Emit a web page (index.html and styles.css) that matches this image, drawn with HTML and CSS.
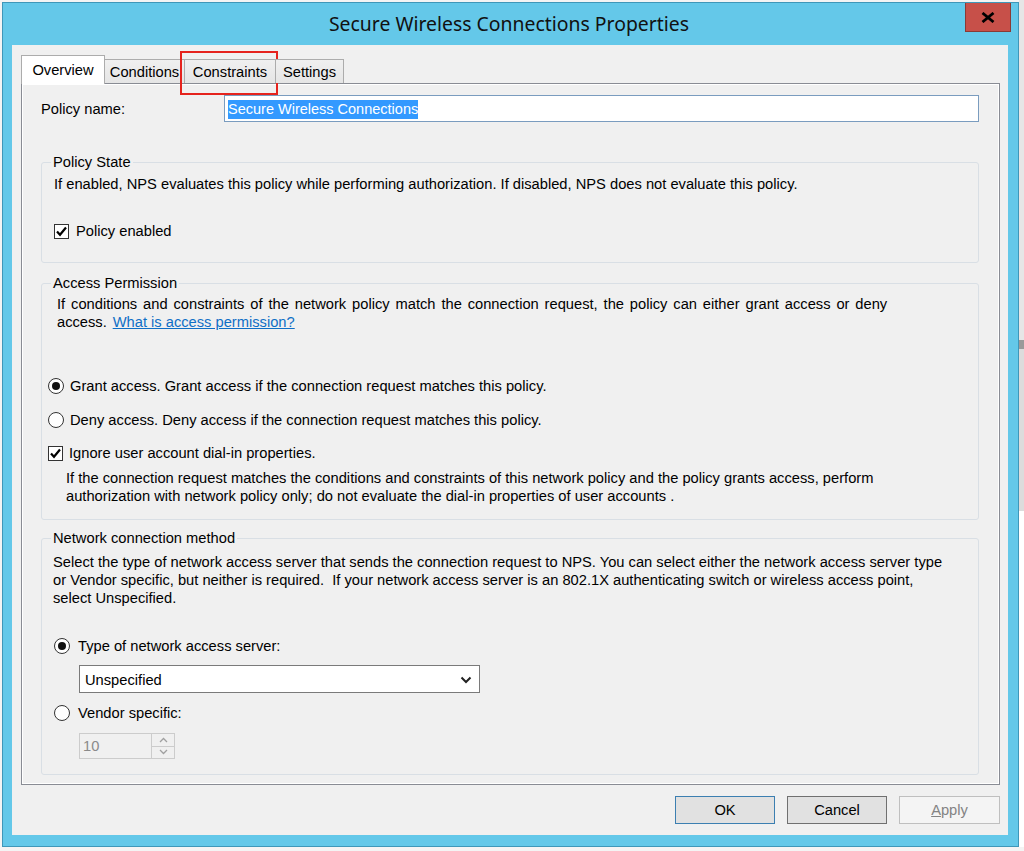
FILE: index.html
```html
<!DOCTYPE html>
<html lang="en">
<head>
  <meta charset="UTF-8">
  <title>Secure Wireless Connections Properties</title>
  <link rel="stylesheet" href="styles.css">
</head>
<body>
  <div class="backdrop-edge"></div>
  <div class="window">
    <div class="titlebar">
      <span></span>
      <h1 class="title">Secure Wireless Connections Properties</h1>
      <button class="close-btn" aria-label="Close">
        <svg width="14" height="11" viewBox="0 0 14 11"><path d="M1.5 1 L12.5 10 M12.5 1 L1.5 10" stroke="#000" stroke-width="2.8" fill="none"/></svg>
      </button>
    </div>

    <div class="client">
      <div class="tabs">
        <div class="tab active tab-overview">Overview</div>
        <div class="tab tab-conditions">Conditions</div>
        <div class="tab tab-constraints">Constraints<span class="callout"></span></div>
        <div class="tab tab-settings">Settings</div>
      </div>

      <div class="pane">
        <div class="name-row">
          <label class="name-label">Policy name:</label>
          <div class="textbox"><span class="selection">Secure Wireless Connections</span></div>
        </div>

        <!-- Policy State -->
        <fieldset class="group group-state">
          <legend>Policy State</legend>
          <p class="desc">If enabled, NPS evaluates this policy while performing authorization. If disabled, NPS does not evaluate this policy.</p>
          <div class="option option-enabled">
            <span class="checkbox checked"><svg width="13" height="13" viewBox="0 0 13 13"><path d="M2 6.5 L5 9.8 L11 2.5" stroke="#000" stroke-width="2.2" fill="none"/></svg></span>
            Policy enabled
          </div>
        </fieldset>

        <!-- Access Permission -->
        <fieldset class="group group-access">
          <legend>Access Permission</legend>
          <p class="desc desc-access">If conditions and constraints of the network policy match the connection request, the policy can either grant access or deny<br>access. <a href="#" class="link">What is access permission?</a></p>
          <div class="option option-grant"><span class="radio checked"></span>Grant access. Grant access if the connection request matches this policy.</div>
          <div class="option option-deny"><span class="radio"></span>Deny access. Deny access if the connection request matches this policy.</div>
          <div class="option option-ignore">
            <span class="checkbox checked"><svg width="13" height="13" viewBox="0 0 13 13"><path d="M2 6.5 L5 9.8 L11 2.5" stroke="#000" stroke-width="2.2" fill="none"/></svg></span>
            Ignore user account dial-in properties.
          </div>
          <p class="note">If the connection request matches the conditions and constraints of this network policy and the policy grants access, perform<br>authorization with network policy only; do not evaluate the dial-in properties of user accounts .</p>
        </fieldset>

        <!-- Network connection method -->
        <fieldset class="group group-method">
          <legend>Network connection method</legend>
          <p class="desc">Select the type of network access server that sends the connection request to NPS. You can select either the network access server type<br>or Vendor specific, but neither is required.&nbsp; If your network access server is an 802.1X authenticating switch or wireless access point,<br>select Unspecified.</p>
          <div class="option option-type"><span class="radio checked"></span>Type of network access server:</div>
          <div class="dropdown">
            <span>Unspecified</span>
            <svg width="12" height="8" viewBox="0 0 12 8"><path d="M1.5 1.5 L6 6 L10.5 1.5" stroke="#222" stroke-width="2" fill="none"/></svg>
          </div>
          <div class="option option-vendor"><span class="radio"></span>Vendor specific:</div>
          <div class="spinner">
            <span class="spinner-value">10</span>
            <span class="spinner-buttons">
              <span class="spin-btn"><svg width="9" height="6" viewBox="0 0 9 6"><path d="M1 5 L4.5 1.5 L8 5" stroke="#a0a0a0" stroke-width="1.3" fill="none"/></svg></span>
              <span class="spin-btn"><svg width="9" height="6" viewBox="0 0 9 6"><path d="M1 1 L4.5 4.5 L8 1" stroke="#a0a0a0" stroke-width="1.3" fill="none"/></svg></span>
            </span>
          </div>
        </fieldset>
      </div>

      <div class="footer">
        <button class="btn btn-default">OK</button>
        <button class="btn btn-focus">Cancel</button>
        <button class="btn" disabled><u>A</u>pply</button>
      </div>
    </div>
  </div>
</body>
</html>
```

FILE: styles.css
```css
body {
  margin: 0;
  background: #f4f4f4;
  font-family: "Liberation Sans", Arial, sans-serif;
  font-size: 14.7px;
  color: #000;
  overflow: hidden;
  position: relative;
}

.backdrop-edge {
  position: absolute;
  top: 0;
  right: 0;
  width: 5px;
  height: 851px;
  background: linear-gradient(#e6e6e6 0 40%, #9a9a9a 40% 41%, #dcdcdc 41% 60%, #ffffff 60%);
}

.window {
  width: 1017px;
  height: 845px;
  margin: 2px 0 0 2px;
  box-sizing: border-box;
  border: 1px solid #3f97b9;
  background: #64c8e9;
  display: flex;
  flex-direction: column;
  position: relative;
}

/* title bar */
.titlebar {
  height: 42px;
  display: grid;
  grid-template-columns: 1fr auto 1fr;
  align-items: center;
  padding-right: 7px;
}

.title {
  margin: 0;
  font-family: "Noto Sans", "Open Sans", sans-serif;
  font-weight: normal;
  font-size: 19.4px;
  color: #111;
  padding: 0 0 1px 4px;
}

.close-btn {
  justify-self: end;
  align-self: start;
  width: 46px;
  height: 29px;
  padding: 0;
  border: 1px solid #8a3a35;
  border-top: none;
  background: #c75049;
  display: flex;
  align-items: center;
  justify-content: center;
}

/* client area */
.client {
  flex: 1;
  margin: 0 10px 11px 9px;
  background: #f0f0f0;
  padding: 10px 8px 0 9px;
  display: flex;
  flex-direction: column;
}

.tabs {
  display: flex;
  align-items: flex-end;
  height: 28px;
  position: relative;
  z-index: 1;
}

.tab {
  height: 24px;
  box-sizing: border-box;
  padding-top: 4px;
  text-align: center;
  border: 1px solid #acacac;
  border-bottom: none;
  margin-left: -1px;
  background: linear-gradient(#f0f0f0, #e5e5e5);
  position: relative;
}

.tab.active {
  height: 29px;
  margin-left: 0;
  margin-bottom: -1px;
  padding-top: 6px;
  background: #ffffff;
  z-index: 2;
}

.tab-overview { width: 84px; }
.tab-conditions { width: 81px; }
.tab-constraints { width: 92px; }
.tab-settings { width: 69px; }

.callout {
  position: absolute;
  left: -5px;
  right: -3px;
  top: -9px;
  bottom: -12px;
  border: 2px solid #e5231d;
}

.pane {
  flex: 1;
  border: 1px solid #898c94;
  box-shadow: inset 0 0 0 1px #ffffff;
  padding: 11px 20px 0 19px;
  display: flex;
  flex-direction: column;
}

.name-row {
  display: flex;
  align-items: center;
  height: 27px;
}

.name-label {
  width: 183px;
}

.textbox {
  flex: 1;
  height: 27px;
  box-sizing: border-box;
  border: 1px solid #7a9cbf;
  background: #fff;
  padding: 5px 3px 0 3px;
  font-size: 14.5px;
}

.selection {
  background: #3399ff;
  color: #fff;
  padding: 1px 0 2px;
}

/* group boxes */
.group {
  margin: 0;
  border: 1px solid #d9dfe5;
  border-radius: 3px;
  padding: 0 11px;
  min-width: 0;
}

.group legend {
  padding: 0 2px;
  margin-left: -2px;
  line-height: 18px;
}

.desc, .note {
  margin: 0;
  line-height: 18px;
  white-space: nowrap;
}

.group-state {
  margin-top: 31px;
  padding-bottom: 22px;
}

.group-state .desc {
  margin-top: 4px;
  margin-left: 1px;
}

.group-access {
  margin-top: 11px;
  padding-bottom: 14px;
}

.group-access .desc {
  margin-top: 3px;
  margin-left: 4px;
}

.desc-access {
  word-spacing: 1.8px;
}

.group-method {
  margin-top: 9px;
  padding-bottom: 15px;
}

.group-method .desc {
  margin-top: 6px;
}

.link {
  color: #0f6fc6;
  word-spacing: 0;
}

/* checkboxes and radios */
.option {
  display: flex;
  align-items: center;
  height: 18px;
  white-space: nowrap;
}

.checkbox {
  width: 13px;
  height: 13px;
  border: 1px solid #333;
  background: #fff;
  margin-right: 7px;
  display: inline-flex;
  align-items: center;
  justify-content: center;
  flex-shrink: 0;
}

.radio {
  width: 14px;
  height: 14px;
  border: 1px solid #333;
  border-radius: 50%;
  background: #fff;
  margin-right: 6px;
  flex-shrink: 0;
  position: relative;
}

.radio.checked::after {
  content: "";
  position: absolute;
  left: 3px;
  top: 3px;
  width: 8px;
  height: 8px;
  border-radius: 50%;
  background: #111;
}

.option-enabled {
  margin-top: 29px;
  margin-left: 1px;
}

.option-grant {
  margin-top: 46px;
  margin-left: -5px;
}

.option-deny {
  margin-top: 16px;
  margin-left: -5px;
}

.option-ignore {
  margin-top: 15px;
  margin-left: -5px;
}

.option-ignore .checkbox {
  margin-right: 6px;
}

.note {
  margin-top: 7px;
  margin-left: 13px;
}

.option-type {
  margin-top: 30px;
  margin-left: 1px;
}

.option-type .radio, .option-vendor .radio {
  margin-right: 8px;
}

.dropdown {
  margin: 10px 0 0 26px;
  width: 401px;
  height: 28px;
  box-sizing: border-box;
  border: 1px solid #7a7a7a;
  background: #fff;
  display: flex;
  align-items: center;
  justify-content: space-between;
  padding: 1px 7px 0 5px;
}

.option-vendor {
  margin-top: 11px;
  margin-left: 1px;
}

.spinner {
  margin: 11px 0 0 26px;
  width: 96px;
  height: 26px;
  box-sizing: border-box;
  border: 1px solid #cccccc;
  background: #f0f0f0;
  display: flex;
}

.spinner-value {
  flex: 1;
  color: #8a8a8a;
  padding: 4px 0 0 3px;
}

.spinner-buttons {
  width: 22px;
  border-left: 1px solid #cccccc;
  display: flex;
  flex-direction: column;
}

.spin-btn {
  flex: 1;
  display: flex;
  align-items: center;
  justify-content: center;
}

.spin-btn + .spin-btn {
  border-top: 1px solid #cccccc;
}

/* dialog buttons */
.footer {
  display: flex;
  justify-content: flex-end;
  gap: 12px;
  padding: 11px 0 11px;
}

.btn {
  width: 100px;
  height: 28px;
  font-family: "Liberation Sans", Arial, sans-serif;
  font-size: 14.7px;
  color: #000;
  background: #e1e1e1;
  border: 1px solid #adadad;
  padding: 0;
}

.btn-default {
  border-color: #3c7fb1;
}

.btn-focus {
  border-color: #707070;
}

.btn:disabled {
  width: 101px;
  background: #f4f4f4;
  border-color: #bfbfbf;
  color: #838383;
}
```
